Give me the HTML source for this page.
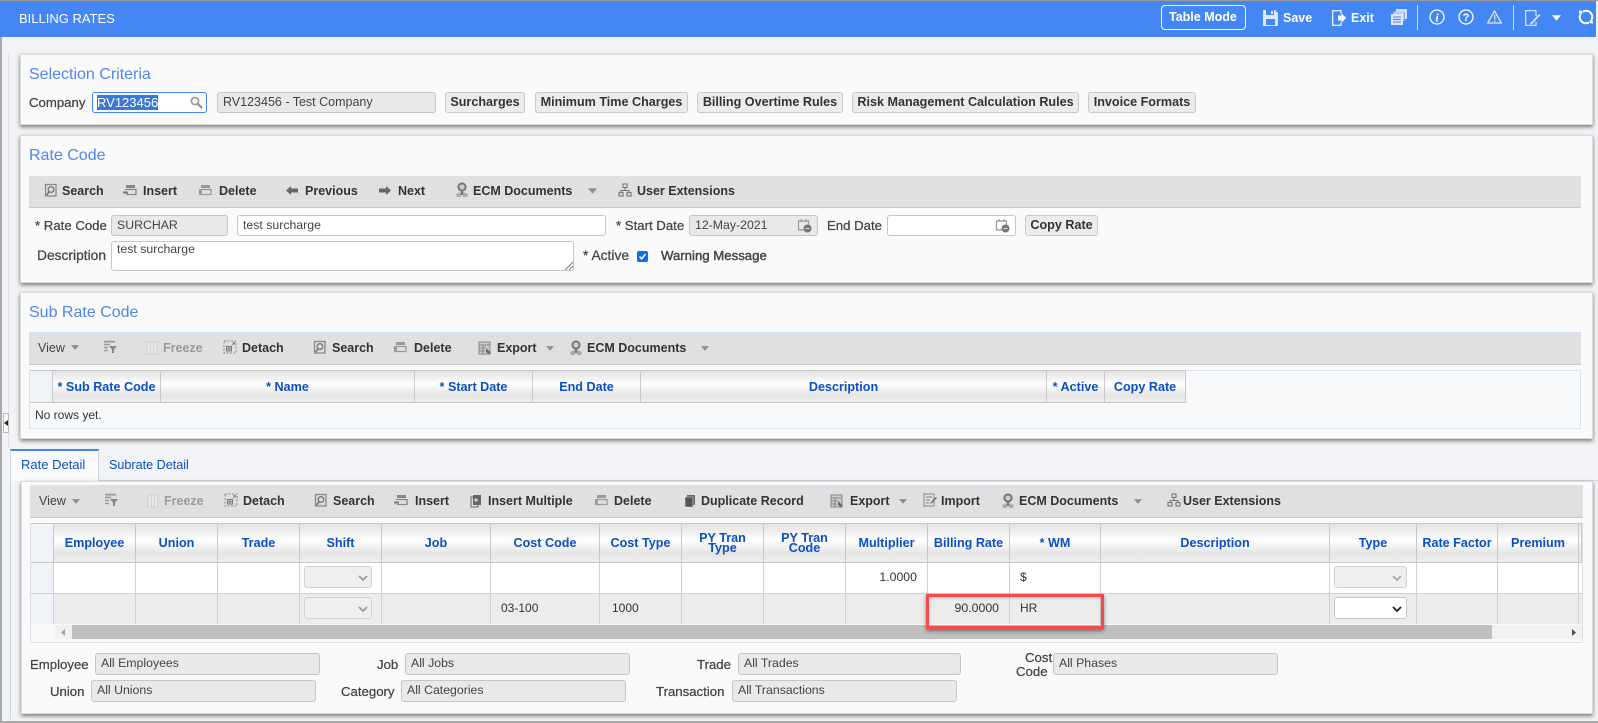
<!DOCTYPE html>
<html><head><meta charset="utf-8"><title>Billing Rates</title>
<style>
html,body{margin:0;padding:0}
body{width:1598px;height:723px;position:relative;overflow:hidden;background:#f1f3f6;font:12px "Liberation Sans",sans-serif;color:#333}
div,span,svg{position:absolute;box-sizing:border-box}
.t{white-space:nowrap;line-height:16px;height:16px;margin-top:1px}
.nm{margin-top:0}
.b{font-weight:bold;color:#333;font-size:12.5px}
.l{color:#444;font-size:13.2px;-webkit-text-stroke:.25px #444}
.pn{background:#fafafa;border:1px solid #dcdcdc;box-shadow:0 2px 4px rgba(0,0,0,.5)}
.ti{color:#4f86f0;font-size:16px;line-height:20px;height:20px;white-space:nowrap;margin-top:1px}
.tb{background:#e0e0e0;border-bottom:1px solid #c8c8c8}
.sp{width:1px;background:#d8dfe8}
.f{border:1px solid #c6c6c6;border-radius:3px;background:#e9e9e9;color:#444;padding-left:5px;line-height:18px;white-space:nowrap;font-size:12.3px}
.w{background:#fff}
.bt{border:1px solid #c9c9c9;border-radius:3px;background:#ececec;font-weight:bold;font-size:12.6px;color:#333;text-align:center;line-height:19px;white-space:nowrap}
.h{background:linear-gradient(#e2e2e2,#f4f4f4 28%,#fff 42%,#e4e4e4 78%,#efefef);border-right:1px solid #c8c8c8;border-top:1px solid #c8c8c8;border-bottom:1px solid #c8c8c8;text-align:center;color:#0b4fc4;font-weight:bold;font-size:12.6px;white-space:nowrap}
.s{border:1px solid #d2d2d2;border-radius:3px;background:#efefef}
.h2{line-height:10px;padding-top:9px}
.wi{fill:none;stroke:#fff;stroke-width:1.3}
</style></head><body>
<svg width="0" height="0" style="display:none">
<symbol id="search" viewBox="0 0 14 14"><rect x="1.5" y="1.5" width="10.5" height="11.5" fill="#ddd" stroke="#8a8a8a" stroke-width="1.3"/><circle cx="7" cy="6.5" r="2.8" fill="none" stroke="#777" stroke-width="1.3"/><path d="M5 9 2.5 12" stroke="#777" stroke-width="1.6"/></symbol>
<symbol id="insert" viewBox="0 0 14 14"><rect x="3" y="2" width="9" height="3" fill="#888"/><path d="M2 6.5h11v5H3" fill="none" stroke="#888" stroke-width="1.3"/><path d="M0 8.500h5v2H0z" fill="#777"/></symbol>
<symbol id="delete" viewBox="0 0 14 14"><rect x="3" y="2" width="9" height="3" fill="#999"/><path d="M2 6.5h11v5H2z" fill="none" stroke="#999" stroke-width="1.3"/><path d="M1 7.500 4 10.500M4 7.500 1 10.500" stroke="#888"/></symbol>
<symbol id="ecm" viewBox="0 0 14 16"><circle cx="7" cy="5" r="3.600" fill="#ccc" stroke="#777" stroke-width="2"/><path d="M6 9h2v4H6z" fill="#777"/><path d="M1 12 6 10v5H2zM13 12 8 10v5h4z" fill="#aaa"/></symbol>
<symbol id="ue" viewBox="0 0 14 14"><g fill="none" stroke="#777" stroke-width="1.100"><rect x="5" y="1" width="4" height="3.500"/><rect x="1" y="9.500" width="4" height="3.500"/><rect x="9" y="9.500" width="4" height="3.500"/><path d="M7 4.500v3M3 9.500v-2h8v2"/></g></symbol>
<symbol id="filter" viewBox="0 0 14 14"><path d="M1 1.500h11M1 4.500h6M1 7.500h4M1 10.500h4" stroke="#999" stroke-width="1.500"/><path d="M1 1h11v1.500H1z" fill="#999"/><path d="M6 6h8l-3 3.500V13H9V9.500z" fill="#888"/></symbol>
<symbol id="freeze" viewBox="0 0 12 14"><path d="M1 1h10v12H1zM4.500 1v12M7.500 1v12" fill="#e8e8e8" stroke="#d0d0d0"/></symbol>
<symbol id="detach" viewBox="0 0 14 14"><path d="M1 1h12v12H1z" fill="none" stroke="#888" stroke-dasharray="2 1.500"/><path d="M3.500 6.500h5v4.500h-5zM3.500 8.700h5M6 6.500v4.500" fill="none" stroke="#777"/><path d="M9 5 11.500 2.500M9.500 2.500h2v2" fill="none" stroke="#888"/></symbol>
<symbol id="export" viewBox="0 0 14 14"><path d="M1 1h11v12H1z" fill="#ccc" stroke="#888"/><path d="M1 4h11M5 4v9M1 7h7M1 10h6" stroke="#888"/><path d="M8 7l5 5-2 1-3-2z" fill="#666"/></symbol>
<symbol id="cal" viewBox="0 0 15 15"><path d="M1.500 3h10v9h-10zM4 1v3M9 1v3" fill="none" stroke="#999" stroke-width="1.200"/><circle cx="10.500" cy="10.500" r="4" fill="#777"/><path d="M8.500 10.500h4" stroke="#ddd"/></symbol>
<symbol id="mi" viewBox="0 0 12 14"><path d="M1 3h7v10H1z" fill="none" stroke="#666"/><path d="M3 1h8v10H3z" fill="#666"/><path d="M6 4v4M4 6h4" stroke="#eee"/></symbol>
<symbol id="dup" viewBox="0 0 12 14"><path d="M3 1h8v10H3z" fill="#666"/><path d="M1 3h8v10H1z" fill="#555" stroke="#e0e0e0" stroke-width=".6"/></symbol>
<symbol id="imp" viewBox="0 0 14 14"><path d="M1 1h10v12H1z" fill="#ddd" stroke="#888"/><path d="M3 4h6M3 7h4M3 10h3" stroke="#888"/><path d="M13 4 8 9l-1 2 2-1 5-5z" fill="#666"/></symbol>
<symbol id="dn" viewBox="0 0 10 6"><path d="M0 0h10L5 6z" fill="#8f8f8f"/></symbol>
<symbol id="chev" viewBox="0 0 10 6"><path d="M1 1l4 4 4-4" fill="none" stroke="currentColor" stroke-width="1.800"/></symbol>
</svg>

<div style="left:0;top:0;width:1598px;height:1px;background:#999"></div>
<div style="left:0;top:1px;width:1596px;height:36px;background:#4386f4"></div>
<div class="t" style="left:19px;top:10px;color:#fff;font-size:13px">BILLING RATES</div>
<div style="left:1161px;top:5px;width:85px;height:25px;border:1px solid #fff;border-radius:4px"></div>
<div class="t" style="left:1169px;top:8px;color:#fff;font-weight:bold;font-size:12.500px">Table Mode</div>
<svg style="left:1263px;top:10px" width="15" height="16" viewBox="0 0 15 16"><path d="M0 0h12l3 3v13H0z" fill="#dbe8fd"/><path d="M3 0h8v5H3z" fill="#4386f4"/><path d="M8 1h2v3H8z" fill="#dbe8fd"/><path d="M3 9h9v6H3z" fill="#4386f4"/></svg>
<div class="t" style="left:1283px;top:9px;color:#fff;font-weight:bold;font-size:12.500px">Save</div>
<svg style="left:1332px;top:10px" width="14" height="16" viewBox="0 0 14 16"><path d="M9 3.500V.7H.7v14.600H9V12.500" fill="none" stroke="#fff" stroke-width="1.200"/><path d="M6 5.500h3.500V3l4.500 5-4.500 5v-2.500H6z" fill="#fff"/></svg>
<div class="t" style="left:1351px;top:9px;color:#fff;font-weight:bold;font-size:12.500px">Exit</div>
<svg style="left:1391px;top:9px" width="16" height="16" viewBox="0 0 16 16"><path d="M5 0h11v10h-2V3H5z" fill="#cfe0fb"/><path d="M2.500 2.500h11v9h-11z" fill="#b8d0f9"/><path d="M0 5h12v11H0z" fill="#dbe8fd"/><path d="M2 8h8M2 10.500h8M2 13h8" stroke="#4386f4"/></svg>
<div style="left:1417px;top:5px;width:1px;height:25px;background:#cfe0fb"></div>
<svg style="left:1429px;top:9px" width="16" height="16" viewBox="0 0 16 16"><circle cx="8" cy="8" r="7" class="wi" stroke-width="1.500"/><text x="8" y="12.500" text-anchor="middle" font-family="Liberation Serif,serif" font-style="italic" font-weight="bold" font-size="12" fill="#fff">i</text></svg>
<svg style="left:1458px;top:9px" width="16" height="16" viewBox="0 0 16 16"><circle cx="8" cy="8" r="7" class="wi" stroke-width="1.500"/><text x="8" y="12" text-anchor="middle" font-family="Liberation Sans,sans-serif" font-weight="bold" font-size="11" fill="#fff">?</text></svg>
<svg style="left:1487px;top:10px" width="15" height="14" viewBox="0 0 15 14"><path d="M7.500 1 14.300 13H.7z" fill="none" stroke="#dbe8fd" stroke-width="1.300"/><path d="M7 5h1.300v4.500H7zM7 10.500h1.300V12H7z" fill="#dbe8fd"/></svg>
<div style="left:1513px;top:5px;width:1px;height:25px;background:#cfe0fb"></div>
<svg style="left:1525px;top:10px" width="16" height="16" viewBox="0 0 16 16"><path d="M11 6V.7H.7v14.600H11V12" fill="none" stroke="#dbe8fd" stroke-width="1.200"/><path d="M5 13.500 14 4l1.300 1.200L6.500 14.500z" fill="#dbe8fd"/></svg>
<svg style="left:1552px;top:15px" width="9" height="6" viewBox="0 0 10 6"><path d="M0 0h10L5 6z" fill="#fff"/></svg>
<svg style="left:1578px;top:9px" width="16" height="16" viewBox="0 0 16 16"><circle cx="8" cy="8" r="6.300" fill="none" stroke="#fff" stroke-width="2"/><path d="M0 1h5v2.500H2.500v2H0zM16 15h-5v-2.500h2.500v-2H16z" fill="#4386f4"/><path d="M1 1.500l4 .5-3.500 3.500zM15 14.500l-4-.5 3.500-3.500z" fill="#fff"/></svg>

<!-- left rail -->
<div style="left:0;top:37px;width:2px;height:686px;background:#a9a9a9"></div>
<div style="left:8px;top:53px;width:1px;height:395px;background:#e2e4e8"></div>
<div style="left:3px;top:413px;width:6px;height:20px;background:#f8f8f8;border:1px solid #bbb"></div>
<svg style="left:4px;top:420px" width="4" height="6" viewBox="0 0 4 6"><path d="M4 0v6L0 3z" fill="#222"/></svg>
<div style="left:2px;top:721px;width:1596px;height:2px;background:#a9a9a9"></div>

<!-- Selection Criteria -->
<div class="pn" style="left:20px;top:54px;width:1573px;height:71px"></div>
<div class="ti" style="left:29px;top:64px">Selection Criteria</div>
<div class="t l" style="left:29px;top:94px">Company</div>
<div class="f w" style="left:92px;top:92px;width:115px;height:21px;border-color:#4386f4"></div>
<div class="t nm" style="left:97px;top:95px;height:15px;line-height:15px;background:#3a78d8;color:#fff;font-size:13px">RV123456</div>
<svg style="left:190px;top:96px" width="13" height="13" viewBox="0 0 13 13"><circle cx="5" cy="5" r="3.600" fill="none" stroke="#999" stroke-width="1.600"/><path d="M7.500 7.500 12 12" stroke="#888" stroke-width="2"/></svg>
<div class="f" style="left:217px;top:92px;width:219px;height:21px;font-size:12.500px">RV123456 - Test Company</div>
<div class="bt" style="left:445px;top:92px;width:80px;height:21px">Surcharges</div>
<div class="bt" style="left:535px;top:92px;width:153px;height:21px">Minimum Time Charges</div>
<div class="bt" style="left:697px;top:92px;width:146px;height:21px">Billing Overtime Rules</div>
<div class="bt" style="left:852px;top:92px;width:227px;height:21px">Risk Management Calculation Rules</div>
<div class="bt" style="left:1088px;top:92px;width:108px;height:21px">Invoice Formats</div>

<!-- Rate Code -->
<div class="pn" style="left:20px;top:135px;width:1573px;height:148px"></div>
<div class="ti" style="left:29px;top:145px">Rate Code</div>
<div class="tb" style="left:29px;top:176px;width:1552px;height:32px"></div>
<svg style="left:44px;top:183px" width="14" height="14"><use href="#search"/></svg><div class="t b" style="left:62px;top:182px">Search</div>
<svg style="left:123px;top:183px" width="14" height="14"><use href="#insert"/></svg><div class="t b" style="left:143px;top:182px">Insert</div>
<svg style="left:198px;top:183px" width="14" height="14"><use href="#delete"/></svg><div class="t b" style="left:219px;top:182px">Delete</div>
<div class="sp" style="left:271px;top:178px;height:28px"></div>
<svg style="left:286px;top:186px" width="12" height="9" viewBox="0 0 12 9"><path d="M0 4.500 5 0v2.500h7v4H5V9z" fill="#666"/></svg><div class="t b" style="left:305px;top:182px">Previous</div>
<svg style="left:379px;top:186px" width="12" height="9" viewBox="0 0 12 9"><path d="M12 4.500 7 0v2.500H0v4h7V9z" fill="#666"/></svg><div class="t b" style="left:398px;top:182px">Next</div>
<div class="sp" style="left:440px;top:178px;height:28px"></div>
<svg style="left:455px;top:182px" width="14" height="16"><use href="#ecm"/></svg><div class="t b" style="left:473px;top:182px">ECM Documents</div>
<svg style="left:588px;top:188px" width="9" height="6"><use href="#dn"/></svg>
<svg style="left:618px;top:183px" width="14" height="14"><use href="#ue"/></svg><div class="t b" style="left:637px;top:182px">User Extensions</div>

<div class="t l" style="left:35px;top:217px">* Rate Code</div>
<div class="f" style="left:111px;top:215px;width:117px;height:21px">SURCHAR</div>
<div class="f w" style="left:237px;top:215px;width:369px;height:21px">test surcharge</div>
<div class="t l" style="left:616px;top:217px">* Start Date</div>
<div class="f" style="left:689px;top:215px;width:129px;height:21px">12-May-2021</div>
<svg style="left:797px;top:218px" width="15" height="15"><use href="#cal"/></svg>
<div class="t l" style="left:827px;top:217px">End Date</div>
<div class="f w" style="left:887px;top:215px;width:129px;height:21px"></div>
<svg style="left:995px;top:218px" width="15" height="15"><use href="#cal"/></svg>
<div class="bt" style="left:1025px;top:215px;width:73px;height:21px">Copy Rate</div>
<div class="t l" style="left:37px;top:247px;font-size:13.800px">Description</div>
<div class="f w" style="left:111px;top:241px;width:463px;height:30px;line-height:14px">test surcharge</div>
<svg style="left:565px;top:262px" width="8" height="8" viewBox="0 0 8 8"><path d="M0 8 8 0M4 8l4-4" stroke="#777"/></svg>
<div class="t l" style="left:583px;top:247px;font-size:13.800px">* Active</div>
<div style="left:637px;top:251px;width:11px;height:11px;background:#0d6ee8;border-radius:2px"></div>
<svg style="left:638px;top:252px" width="9" height="9" viewBox="0 0 9 9"><path d="M1.500 4.500 3.700 6.800 7.500 2" fill="none" stroke="#fff" stroke-width="1.500"/></svg>
<div class="t l" style="left:661px;top:247px;font-size:13.200px;-webkit-text-stroke:.4px #444">Warning Message</div>

<!-- Sub Rate Code -->
<div class="pn" style="left:20px;top:292px;width:1573px;height:147px"></div>
<div class="ti" style="left:29px;top:302px">Sub Rate Code</div>
<div class="tb" style="left:29px;top:332px;width:1552px;height:33px;border-top:1px solid #d4e2f5"></div>
<div class="t" style="left:38px;top:339px;color:#444;font-size:12.500px">View</div><svg style="left:71px;top:345px" width="8" height="5"><use href="#dn"/></svg>
<div class="sp" style="left:92px;top:334px;height:29px"></div>
<svg style="left:103px;top:340px" width="14" height="14"><use href="#filter"/></svg>
<div class="sp" style="left:130px;top:334px;height:29px"></div>
<svg style="left:146px;top:341px" width="12" height="14"><use href="#freeze"/></svg><div class="t b" style="left:163px;top:339px;color:#9a9a9a">Freeze</div>
<svg style="left:223px;top:340px" width="14" height="14"><use href="#detach"/></svg><div class="t b" style="left:242px;top:339px">Detach</div>
<div class="sp" style="left:298px;top:334px;height:29px"></div>
<svg style="left:313px;top:340px" width="14" height="14"><use href="#search"/></svg><div class="t b" style="left:332px;top:339px">Search</div>
<svg style="left:393px;top:340px" width="14" height="14"><use href="#delete"/></svg><div class="t b" style="left:414px;top:339px">Delete</div>
<div class="sp" style="left:466px;top:334px;height:29px"></div>
<svg style="left:478px;top:341px" width="14" height="14"><use href="#export"/></svg><div class="t b" style="left:497px;top:339px">Export</div><svg style="left:546px;top:346px" width="8" height="5"><use href="#dn"/></svg>
<svg style="left:569px;top:340px" width="14" height="16"><use href="#ecm"/></svg><div class="t b" style="left:587px;top:339px">ECM Documents</div><svg style="left:701px;top:346px" width="8" height="5"><use href="#dn"/></svg>

<div style="left:29px;top:370px;width:1552px;height:59px;background:#f8f9fb;border:1px solid #dbe1e8"></div>
<div style="left:30px;top:370px;width:23px;height:33px;background:#eff2f7;border-top:1px solid #c8c8c8;border-bottom:1px solid #c8c8c8;border-right:1px solid #c8c8c8"></div>
<div class="h" style="left:53px;top:370px;width:108px;height:33px;line-height:32px">* Sub Rate Code</div>
<div class="h" style="left:161px;top:370px;width:254px;height:33px;line-height:32px">* Name</div>
<div class="h" style="left:415px;top:370px;width:118px;height:33px;line-height:32px">* Start Date</div>
<div class="h" style="left:533px;top:370px;width:108px;height:33px;line-height:32px">End Date</div>
<div class="h" style="left:641px;top:370px;width:406px;height:33px;line-height:32px">Description</div>
<div class="h" style="left:1047px;top:370px;width:58px;height:33px;line-height:32px">* Active</div>
<div class="h" style="left:1105px;top:370px;width:81px;height:33px;line-height:32px">Copy Rate</div>
<div class="t nm" style="left:35px;top:407px;color:#333">No rows yet.</div>

<!-- Tabs -->
<div style="left:10px;top:480px;width:1588px;height:241px;border-left:1px solid #cfd6e0;border-top:1px solid #cfd6e0"></div>
<div style="left:10px;top:449px;width:89px;height:32px;background:#fafbfc;border-top:2px solid #4386f4;border-right:1px solid #cfd6e0;border-left:1px solid #cfd6e0"></div>
<div class="t" style="left:21px;top:456px;color:#0b4fc4;font-size:13px">Rate Detail</div>
<div class="t" style="left:109px;top:456px;color:#0b4fc4;font-size:12.600px">Subrate Detail</div>

<!-- Rate Detail -->
<div class="pn" style="left:21px;top:481px;width:1572px;height:233px"></div>
<div class="tb" style="left:30px;top:485px;width:1553px;height:33px;border-top:1px solid #d4e2f5"></div>
<div class="t" style="left:39px;top:492px;color:#444;font-size:12.500px">View</div><svg style="left:72px;top:499px" width="8" height="5"><use href="#dn"/></svg>
<div class="sp" style="left:94px;top:487px;height:29px"></div>
<svg style="left:104px;top:493px" width="14" height="14"><use href="#filter"/></svg>
<div class="sp" style="left:131px;top:487px;height:29px"></div>
<svg style="left:147px;top:494px" width="12" height="14"><use href="#freeze"/></svg><div class="t b" style="left:164px;top:492px;color:#9a9a9a">Freeze</div>
<svg style="left:224px;top:493px" width="14" height="14"><use href="#detach"/></svg><div class="t b" style="left:243px;top:492px">Detach</div>
<div class="sp" style="left:299px;top:487px;height:29px"></div>
<svg style="left:314px;top:493px" width="14" height="14"><use href="#search"/></svg><div class="t b" style="left:333px;top:492px">Search</div>
<svg style="left:394px;top:493px" width="14" height="14"><use href="#insert"/></svg><div class="t b" style="left:415px;top:492px">Insert</div>
<svg style="left:470px;top:494px" width="12" height="14"><use href="#mi"/></svg><div class="t b" style="left:488px;top:492px">Insert Multiple</div>
<svg style="left:594px;top:493px" width="14" height="14"><use href="#delete"/></svg><div class="t b" style="left:614px;top:492px">Delete</div>
<div class="sp" style="left:667px;top:487px;height:29px"></div>
<svg style="left:684px;top:494px" width="12" height="14"><use href="#dup"/></svg><div class="t b" style="left:701px;top:492px">Duplicate Record</div>
<div class="sp" style="left:818px;top:487px;height:29px"></div>
<svg style="left:830px;top:494px" width="14" height="14"><use href="#export"/></svg><div class="t b" style="left:850px;top:492px">Export</div><svg style="left:899px;top:499px" width="8" height="5"><use href="#dn"/></svg>
<svg style="left:923px;top:493px" width="14" height="14"><use href="#imp"/></svg><div class="t b" style="left:941px;top:492px">Import</div>
<div class="sp" style="left:990px;top:487px;height:29px"></div>
<svg style="left:1001px;top:493px" width="14" height="16"><use href="#ecm"/></svg><div class="t b" style="left:1019px;top:492px">ECM Documents</div><svg style="left:1134px;top:499px" width="8" height="5"><use href="#dn"/></svg>
<svg style="left:1167px;top:493px" width="14" height="14"><use href="#ue"/></svg><div class="t b" style="left:1183px;top:492px">User Extensions</div>

<!-- grid -->
<div style="left:30px;top:523px;width:1553px;height:120px;background:#f8f9fb;border:1px solid #dbe1e8"></div>
<div style="left:31px;top:523px;width:23px;height:40px;background:#eff2f7;border-top:1px solid #c8c8c8;border-bottom:1px solid #c8c8c8;border-right:1px solid #c8c8c8"></div>
<div class="h" style="left:54px;top:523px;width:82px;height:40px;line-height:38px">Employee</div>
<div class="h" style="left:136px;top:523px;width:82px;height:40px;line-height:38px">Union</div>
<div class="h" style="left:218px;top:523px;width:82px;height:40px;line-height:38px">Trade</div>
<div class="h" style="left:300px;top:523px;width:82px;height:40px;line-height:38px">Shift</div>
<div class="h" style="left:382px;top:523px;width:109px;height:40px;line-height:38px">Job</div>
<div class="h" style="left:491px;top:523px;width:109px;height:40px;line-height:38px">Cost Code</div>
<div class="h" style="left:600px;top:523px;width:82px;height:40px;line-height:38px">Cost Type</div>
<div class="h h2" style="left:682px;top:523px;width:82px;height:40px">PY Tran<br>Type</div>
<div class="h h2" style="left:764px;top:523px;width:82px;height:40px">PY Tran<br>Code</div>
<div class="h" style="left:846px;top:523px;width:82px;height:40px;line-height:38px">Multiplier</div>
<div class="h" style="left:928px;top:523px;width:82px;height:40px;line-height:38px">Billing Rate</div>
<div class="h" style="left:1010px;top:523px;width:91px;height:40px;line-height:38px">* WM</div>
<div class="h" style="left:1101px;top:523px;width:229px;height:40px;line-height:38px">Description</div>
<div class="h" style="left:1330px;top:523px;width:87px;height:40px;line-height:38px">Type</div>
<div class="h" style="left:1417px;top:523px;width:81px;height:40px;line-height:38px">Rate Factor</div>
<div class="h" style="left:1498px;top:523px;width:81px;height:40px;line-height:38px">Premium</div>
<div class="h" style="left:1579px;top:523px;width:3px;height:40px"></div>

<div style="left:31px;top:563px;width:23px;height:61px;background:#eff2f7;border-right:1px solid #d0d0d0"></div>
<div style="left:31px;top:593px;width:23px;height:1px;background:#d0d0d0"></div>
<div style="left:54px;top:563px;width:1528px;height:31px;background:#fff;border-bottom:1px solid #d0d0d0"></div>
<div style="left:54px;top:594px;width:1528px;height:30px;background:#ececec"></div>
<div style="left:135px;top:563px;width:1px;height:61px;background:#d0d0d0"></div>
<div style="left:217px;top:563px;width:1px;height:61px;background:#d0d0d0"></div>
<div style="left:299px;top:563px;width:1px;height:61px;background:#d0d0d0"></div>
<div style="left:381px;top:563px;width:1px;height:61px;background:#d0d0d0"></div>
<div style="left:490px;top:563px;width:1px;height:61px;background:#d0d0d0"></div>
<div style="left:599px;top:563px;width:1px;height:61px;background:#d0d0d0"></div>
<div style="left:681px;top:563px;width:1px;height:61px;background:#d0d0d0"></div>
<div style="left:763px;top:563px;width:1px;height:61px;background:#d0d0d0"></div>
<div style="left:845px;top:563px;width:1px;height:61px;background:#d0d0d0"></div>
<div style="left:927px;top:563px;width:1px;height:61px;background:#d0d0d0"></div>
<div style="left:1009px;top:563px;width:1px;height:61px;background:#d0d0d0"></div>
<div style="left:1100px;top:563px;width:1px;height:61px;background:#d0d0d0"></div>
<div style="left:1329px;top:563px;width:1px;height:61px;background:#d0d0d0"></div>
<div style="left:1416px;top:563px;width:1px;height:61px;background:#d0d0d0"></div>
<div style="left:1497px;top:563px;width:1px;height:61px;background:#d0d0d0"></div>
<div style="left:1578px;top:563px;width:1px;height:61px;background:#d0d0d0"></div>

<div class="s" style="left:304px;top:566px;width:68px;height:22px"></div><svg style="left:358px;top:575px;color:#999" width="10" height="6"><use href="#chev"/></svg>
<div class="s" style="left:304px;top:597px;width:68px;height:22px"></div><svg style="left:358px;top:606px;color:#999" width="10" height="6"><use href="#chev"/></svg>
<div class="s" style="left:1334px;top:566px;width:73px;height:22px"></div><svg style="left:1392px;top:575px;color:#aaa" width="10" height="6"><use href="#chev"/></svg>
<div class="s" style="left:1334px;top:597px;width:73px;height:22px;background:#fff;border-color:#c6c6c6"></div><svg style="left:1392px;top:606px;color:#222" width="10" height="6"><use href="#chev"/></svg>

<div class="t nm" style="left:501px;top:600px">03-100</div>
<div class="t nm" style="left:612px;top:600px">1000</div>
<div class="t nm" style="left:856px;top:569px;width:61px;text-align:right;font-size:12.300px">1.0000</div>
<div class="t nm" style="left:938px;top:600px;width:61px;text-align:right;font-size:12.300px">90.0000</div>
<div class="t nm" style="left:1020px;top:569px">$</div>
<div class="t nm" style="left:1020px;top:600px">HR</div>

<div style="left:55px;top:625px;width:1527px;height:14px;background:#f1f1f1"></div>
<div style="left:72px;top:625px;width:1420px;height:14px;background:#c0c0c0"></div>
<svg style="left:61px;top:629px" width="4" height="7" viewBox="0 0 4 7"><path d="M4 0v7L0 3.500z" fill="#a3a3a3"/></svg>
<svg style="left:1572px;top:629px" width="4" height="7" viewBox="0 0 4 7"><path d="M0 0v7l4-3.500z" fill="#505050"/></svg>

<div style="left:926px;top:594px;width:178px;height:35px;border:3px solid #f34a4a;box-shadow:0 2px 4px rgba(0,0,0,.45),inset 0 1px 3px rgba(0,0,0,.2)"></div>

<!-- bottom fields -->
<div class="t l" style="left:30px;top:656px">Employee</div>
<div class="f" style="left:95px;top:653px;width:225px;height:22px">All Employees</div>
<div class="t l" style="left:377px;top:656px">Job</div>
<div class="f" style="left:405px;top:653px;width:225px;height:22px">All Jobs</div>
<div class="t l" style="left:697px;top:656px">Trade</div>
<div class="f" style="left:738px;top:653px;width:223px;height:22px">All Trades</div>
<div class="t l" style="left:1025px;top:649px">Cost</div>
<div class="t l" style="left:1016px;top:663px">Code</div>
<div class="f" style="left:1053px;top:653px;width:225px;height:22px">All Phases</div>
<div class="t l" style="left:50px;top:683px">Union</div>
<div class="f" style="left:91px;top:680px;width:225px;height:22px">All Unions</div>
<div class="t l" style="left:341px;top:683px">Category</div>
<div class="f" style="left:401px;top:680px;width:225px;height:22px">All Categories</div>
<div class="t l" style="left:656px;top:683px">Transaction</div>
<div class="f" style="left:732px;top:680px;width:225px;height:22px">All Transactions</div>
</body></html>
